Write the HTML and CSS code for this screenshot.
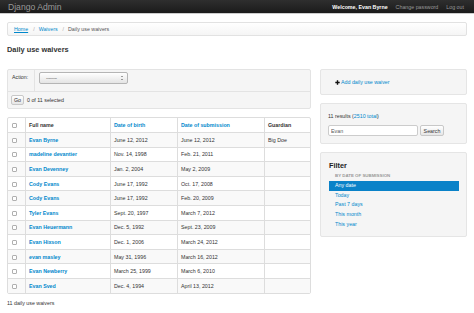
FILE: index.html
```html
<!DOCTYPE html>
<html lang="en">
<head>
  <meta charset="UTF-8" />
  <title>Django Admin</title>
  <link rel="stylesheet" href="styles.css">
</head>
<body>
  <div class="navbar">
    <a class="brand" href="#">Django Admin</a>
    <ul class="nav-right">
      <li class="welcome">Welcome, Evan Byrne</li>
      <li><a href="#">Change password</a></li>
      <li><a href="#">Log out</a></li>
    </ul>
  </div>

  <div class="container">
    <ul class="breadcrumb">
      <li><a class="home" href="#">Home</a><span class="divider">/</span></li>
      <li><a href="#">Waivers</a><span class="divider">/</span></li>
      <li class="active">Daily use waivers</li>
    </ul>

    <h1>Daily use waivers</h1>

    <div class="row">
      <div class="main">
        <form class="actions">
          <div class="action-row">
            <label>Action:</label>
            <div class="action-field">
              <span class="select">---------<span class="arrows"></span></span>
            </div>
          </div>
          <div class="go-row">
            <button type="button" class="btn go">Go</button>
            <span>0 of 11 selected</span>
          </div>
        </form>

        <table class="results">
          <colgroup>
            <col class="c-check"><col class="c-name"><col class="c-dob"><col class="c-sub"><col class="c-guard">
          </colgroup>
          <thead>
            <tr>
              <th><span class="checkbox"></span></th>
              <th>Full name</th>
              <th><a href="#">Date of birth</a></th>
              <th><a href="#">Date of submission</a></th>
              <th>Guardian</th>
            </tr>
          </thead>
          <tbody id="rows"></tbody>
        </table>

        <p class="paginator">11 daily use waivers</p>
      </div>

      <div class="sidebar">
        <div class="well add-box">
          <a href="#" class="add-link"><svg class="plus" width="5" height="5" viewBox="0 0 5 5"><path d="M2.5 0.3v4.4M0.3 2.5h4.4" stroke="#111" stroke-width="1.4"/></svg>Add daily use waiver</a>
        </div>

        <div class="well search-box">
          <p class="count">11 results (<a href="#">2510 total</a>)</p>
          <div class="search-row">
            <input type="text" value="Evan">
            <button type="button" class="btn">Search</button>
          </div>
        </div>

        <div class="well filter-box">
          <h3>Filter</h3>
          <ul class="nav-list">
            <li class="nav-header">By date of submission</li>
            <li class="active"><a href="#">Any date</a></li>
            <li><a href="#">Today</a></li>
            <li><a href="#">Past 7 days</a></li>
            <li><a href="#">This month</a></li>
            <li><a href="#">This year</a></li>
          </ul>
        </div>
      </div>
    </div>
  </div>

  <script>
    const waivers = [
      ["Evan Byrne", "June 12, 2012", "June 12, 2012", "Big Doe"],
      ["madeline devantier", "Nov. 14, 1998", "Feb. 21, 2011", ""],
      ["Evan Devenney", "Jan. 2, 2004", "May 2, 2009", ""],
      ["Cody Evans", "June 17, 1992", "Oct. 17, 2008", ""],
      ["Cody Evans", "June 17, 1992", "Feb. 20, 2009", ""],
      ["Tyler Evans", "Sept. 20, 1997", "March 7, 2012", ""],
      ["Evan Heuermann", "Dec. 5, 1992", "Sept. 23, 2009", ""],
      ["Evan Hixson", "Dec. 1, 2006", "March 24, 2012", ""],
      ["evan masley", "May 31, 1996", "March 16, 2012", ""],
      ["Evan Newberry", "March 25, 1999", "March 6, 2010", ""],
      ["Evan Sved", "Dec. 4, 1994", "April 13, 2012", ""]
    ];

    const body = document.getElementById("rows");
    waivers.forEach(w => {
      const tr = document.createElement("tr");
      tr.innerHTML = `<td><span class="checkbox"></span></td>
        <td><a href="#" class="name">${w[0]}</a></td>
        <td>${w[1]}</td>
        <td>${w[2]}</td>
        <td>${w[3]}</td>`;
      body.appendChild(tr);
    });
  </script>
</body>
</html>
```

FILE: styles.css
```css
body {
  margin: 0;
  font-family: "Liberation Sans", Arial, sans-serif;
  font-size: 5.3px;
  color: #333;
  background: #fff;
}
a {
  color: #0088cc;
  text-decoration: none;
}
ul {
  list-style: none;
  margin: 0;
  padding: 0;
}

.navbar {
  height: 14px;
  padding: 0 10px 0 8px;
  display: flex;
  align-items: center;
  justify-content: space-between;
  background: linear-gradient(#2e2e2e, #1b1b1b);
  border-bottom: 1px solid #ccc;
  box-sizing: border-box;
}
.brand {
  color: #999;
  font-size: 8.6px;
}
.nav-right {
  display: flex;
  gap: 8px;
}
.nav-right a {
  color: #999;
}
.welcome {
  color: #fff;
  font-weight: bold;
}

.container {
  padding: 0 7px;
}
.breadcrumb {
  margin-top: 8px;
  height: 14px;
  padding: 0 6px;
  box-sizing: border-box;
  display: flex;
  align-items: center;
  border: 1px solid #e2e2e2;
  border-radius: 2px;
  background: linear-gradient(#ffffff, #f5f5f5);
}
.breadcrumb .home {
  text-decoration: underline;
}
.divider {
  color: #aaa;
  padding: 0 4px 0 5px;
}
.breadcrumb .active {
  color: #555;
}

h1 {
  font-size: 7.4px;
  line-height: 10px;
  margin: 9px 0 14px;
  color: #333;
}

.row {
  display: flex;
  gap: 9px;
}
.main {
  width: 304px;
}
.sidebar {
  width: 147px;
}

.actions {
  margin: 0;
  background: #f5f5f5;
  border: 1px solid #e3e3e3;
  border-radius: 2px;
}
.action-row {
  display: flex;
  height: 21px;
  border-bottom: 1px solid #e3e3e3;
}
.action-row label {
  width: 22px;
  padding: 4px 0 0 4px;
  border-right: 1px solid #e3e3e3;
}
.action-field {
  padding: 2px 0 0 4px;
}
.select {
  position: relative;
  display: flex;
  align-items: center;
  width: 89px;
  height: 12px;
  padding-left: 6px;
  box-sizing: border-box;
  border: 1px solid #b5b5b5;
  border-radius: 2px;
  background: linear-gradient(#ffffff, #e4e4e4);
  color: #555;
  font-size: 4.5px;
  letter-spacing: -0.3px;
}
.arrows {
  position: absolute;
  right: 4px;
  top: 3px;
  width: 0;
  height: 4px;
  border-left: 1.2px solid transparent;
  border-right: 1.2px solid transparent;
}
.arrows::before,
.arrows::after {
  content: "";
  position: absolute;
  left: -1.2px;
  border-left: 1.2px solid transparent;
  border-right: 1.2px solid transparent;
}
.arrows::before {
  top: 0;
  border-bottom: 1.5px solid #444;
}
.arrows::after {
  bottom: 0;
  border-top: 1.5px solid #444;
}
.go-row {
  height: 16px;
  padding-left: 3px;
  display: flex;
  align-items: center;
  gap: 3px;
}

.btn {
  font-family: inherit;
  font-size: 5.3px;
  color: #333;
  padding: 0;
  border: 1px solid #c8c8c8;
  border-radius: 2px;
  background: linear-gradient(#ffffff, #e6e6e6);
}
.go {
  width: 13px;
  height: 10px;
}

.results {
  width: 100%;
  margin-top: 8px;
  table-layout: fixed;
  border-collapse: separate;
  border-spacing: 0;
  border: 1px solid #ddd;
  border-radius: 2px;
}
.c-check { width: 17px; }
.c-name { width: 85px; }
.c-dob { width: 67px; }
.c-sub { width: 87px; }
.c-guard { width: 46px; }
.results th,
.results td {
  padding: 0 3px;
  text-align: left;
  white-space: nowrap;
  border-left: 1px solid #ddd;
}
.results th:first-child,
.results td:first-child {
  border-left: none;
  padding-left: 4px;
}
.results thead tr {
  height: 14px;
}
.results tbody tr {
  height: 14.6px;
}
.results td {
  border-top: 1px solid #ddd;
}
.results tbody tr:nth-child(odd) td {
  background: #f9f9f9;
}
.results th {
  font-weight: bold;
}
.name {
  font-weight: bold;
}
.checkbox {
  display: inline-block;
  width: 3px;
  height: 3px;
  border: 1px solid #b0b0b0;
  border-radius: 1px;
  background: #fff;
  vertical-align: middle;
}
.paginator {
  margin: 6px 0 0;
  line-height: 7px;
}

.well {
  background: #f5f5f5;
  border: 1px solid #e5e5e5;
  border-radius: 2px;
  margin-bottom: 8px;
}
.add-box {
  height: 26px;
  box-sizing: border-box;
  padding-left: 14px;
  display: flex;
  align-items: center;
}
.add-link {
  display: flex;
  align-items: center;
  gap: 1px;
}
.plus {
  display: block;
}
.search-box {
  padding: 9px 7px 7px;
}
.count {
  margin: 0 0 5px;
  line-height: 7px;
}
.search-row {
  display: flex;
  gap: 2px;
}
.search-row input {
  width: 90px;
  height: 11px;
  box-sizing: border-box;
  margin: 0;
  padding: 0 2px;
  font-family: inherit;
  font-size: 5.3px;
  color: #555;
  border: 1px solid #ccc;
  border-radius: 2px;
  background: #fff;
}
.search-row .btn {
  width: 24px;
  height: 11px;
}
.filter-box {
  height: 85px;
  box-sizing: border-box;
  padding: 8px 7px 0 8px;
}
.filter-box h3 {
  margin: 0;
  font-size: 7.3px;
  line-height: 9px;
  color: #222;
}
.nav-list {
  margin-top: 3px;
}
.nav-header {
  padding-left: 6px;
  height: 7px;
  line-height: 6px;
  font-size: 4.4px;
  font-weight: bold;
  color: #999;
  text-transform: uppercase;
  margin-bottom: 1px;
}
.nav-list li a {
  display: block;
  padding-left: 6px;
  line-height: 9.7px;
}
.nav-list .active a {
  background: #0a82c8;
  color: #fff;
}
```
